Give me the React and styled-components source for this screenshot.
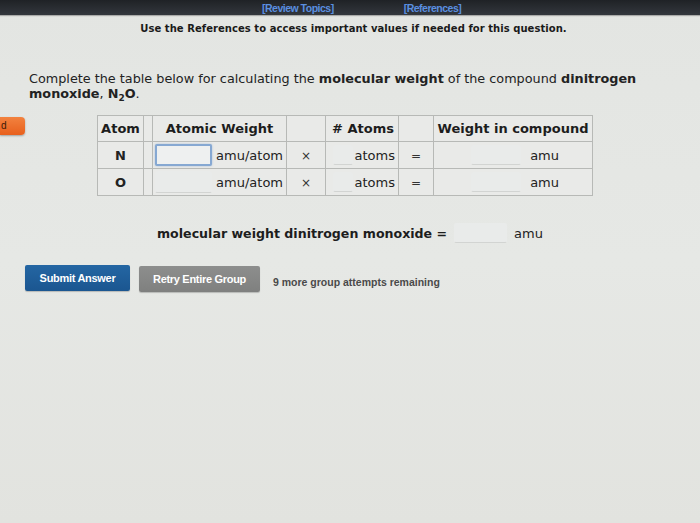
import React from "react";
import styled, { createGlobalStyle } from "styled-components";

const Global = createGlobalStyle`
  html, body { margin: 0; padding: 0; }
  body {
    background: #e4e6e3;
    font-family: "DejaVu Sans", Verdana, sans-serif;
    color: #1c1c1c;
    width: 700px;
    height: 523px;
    overflow: hidden;
  }
`;

const Page = styled.div`
  display: flex;
  flex-direction: column;
  width: 700px;
  height: 523px;
  background: linear-gradient(180deg, #e3e5e2 0%, #e6e8e5 50%, #e2e3df 100%);
`;

const TopBar = styled.div`
  height: 15px;
  background: linear-gradient(180deg, #1f2226 0%, #33373d 100%);
  display: flex;
  align-items: center;
  padding-left: 262px;
  gap: 70px;
  box-shadow: 0 1px 1px rgba(0,0,0,0.25);
`;

const BarLink = styled.span`
  font-family: "Liberation Sans", Arial, sans-serif;
  font-weight: 700;
  font-size: 10.5px;
  letter-spacing: -0.5px;
  color: #5a8fe0;
`;

const Notice = styled.div`
  text-align: center;
  font-weight: 700;
  font-size: 10px;
  letter-spacing: 0.05px;
  margin-top: 8px;
  padding-left: 7px;
  color: #1a1a1a;
`;

const Intro = styled.p`
  margin: 37px 0 0 29px;
  width: 650px;
  font-size: 12.8px;
  line-height: 15px;
  color: #222;
  b { font-weight: 700; }
`;

const Formula = styled.b`
  display: inline-block;
  line-height: 15px;
`;

const Sub = styled.span`
  font-size: 9px;
  position: relative;
  top: 3px;
`;

const TableRow = styled.div`
  display: flex;
  align-items: flex-start;
  margin-top: 12px;
`;

const SideTab = styled.div`
  width: 25px;
  height: 18px;
  margin-top: 2px;
  border-radius: 0 4px 4px 0;
  background: linear-gradient(180deg, #f2823f 0%, #e8601d 100%);
  box-shadow: 0 1px 2px rgba(0,0,0,0.3);
  font-family: "Liberation Sans", Arial, sans-serif;
  font-size: 10px;
  color: #3a1a08;
  line-height: 18px;
  padding-left: 1px;
  box-sizing: border-box;
  overflow: hidden;
`;

const Table = styled.table`
  margin-left: 72px;
  border-collapse: collapse;
  table-layout: fixed;
  width: 495px;
  border: 1px solid #a9aba8;
  background: #e9eae8;
`;

const Col = styled.col`
  width: ${p => p.$w}px;
`;

const Th = styled.th`
  height: 25px;
  padding: 0 ${p => p.$pad ?? 2}px;
  font-size: 13px;
  font-weight: 700;
  text-align: ${p => p.$align || "center"};
  border: 1px solid #b7b9b6;
  color: #1d1d1d;
  white-space: nowrap;
  overflow: hidden;
`;

const Td = styled.td`
  height: 26px;
  padding: 0 ${p => p.$pr ?? 2}px 0 ${p => p.$pl ?? 2}px;
  font-size: 13px;
  font-weight: ${p => (p.$bold ? 700 : 400)};
  text-align: center;
  border: 1px solid #b7b9b6;
  color: #222;
  white-space: nowrap;
  overflow: hidden;
`;

const Cell = styled.div`
  display: flex;
  align-items: center;
  justify-content: space-between;
`;

const Field = styled.div`
  width: ${p => p.$w}px;
  height: ${p => p.$h || 20}px;
  box-sizing: border-box;
  background: ${p => (p.$focus ? "#eef0f0" : "#e9ebea")};
  border: ${p => (p.$focus ? "2px solid #86a8d2" : "1px solid transparent")};
  border-bottom: ${p => (p.$focus ? "2px solid #86a8d2" : "1px solid #d2d4d2")};
  border-radius: 2px;
  box-shadow: ${p => (p.$focus ? "0 0 2px rgba(90,140,200,0.5)" : "none")};
`;

const Unit = styled.span`
  font-size: 13px;
  color: #222;
`;

const Op = styled.span`
  font-size: 12px;
  color: #333;
`;

const MolRow = styled.div`
  display: flex;
  align-items: center;
  margin: 27px 0 0 157px;
  gap: 7px;
`;

const MolLabel = styled.span`
  font-size: 12.6px;
  font-weight: 700;
  color: #1d1d1d;
`;

const Buttons = styled.div`
  display: flex;
  align-items: center;
  margin: 21px 0 0 25px;
  gap: 9px;
`;

const Btn = styled.div`
  height: 26px;
  width: ${p => p.$w}px;
  margin-top: ${p => p.$mt || 0}px;
  display: flex;
  align-items: center;
  justify-content: center;
  border-radius: 2px;
  background: ${p => p.$bg};
  font-family: "Liberation Sans", Arial, sans-serif;
  font-weight: 700;
  font-size: 11px;
  letter-spacing: -0.3px;
  color: #fff;
  box-shadow: 0 1px 1px rgba(0,0,0,0.2);
`;

const Remaining = styled.span`
  margin-left: 4px;
  margin-top: 8px;
  font-family: "Liberation Sans", Arial, sans-serif;
  font-weight: 700;
  font-size: 10.5px;
  color: #4a4a4a;
`;

const rows = [
  { atom: "N", focus: true },
  { atom: "O", focus: false },
];

export default function App() {
  return (
    <>
      <Global />
      <Page>
        <TopBar>
          <BarLink>[Review Topics]</BarLink>
          <BarLink>[References]</BarLink>
        </TopBar>
        <Notice>Use the References to access important values if needed for this question.</Notice>
        <Intro>
          Complete the table below for calculating the <b>molecular weight</b> of the compound <b>dinitrogen monoxide</b>, <Formula>N<Sub>2</Sub>O</Formula>.
        </Intro>
        <TableRow>
          <SideTab>d</SideTab>
          <Table>
            <colgroup>
              <Col $w={46} />
              <Col $w={9} />
              <Col $w={134} />
              <Col $w={39} />
              <Col $w={73} />
              <Col $w={35} />
              <Col $w={159} />
            </colgroup>
            <thead>
              <tr>
                <Th>Atom</Th>
                <Th $pad={0}></Th>
                <Th>Atomic Weight</Th>
                <Th></Th>
                <Th $align="right" $pad={4}>&#35; Atoms</Th>
                <Th></Th>
                <Th>Weight in compound</Th>
              </tr>
            </thead>
            <tbody>
              {rows.map(r => (
                <tr key={r.atom}>
                  <Td $bold>{r.atom}</Td>
                  <Td $pl={0} $pr={0}></Td>
                  <Td $pl={2} $pr={3}>
                    <Cell>
                      <Field $w={57} $h={22} $focus={r.focus} />
                      <Unit>amu/atom</Unit>
                    </Cell>
                  </Td>
                  <Td><Op>×</Op></Td>
                  <Td $pl={7} $pr={3}>
                    <Cell>
                      <Field $w={20} />
                      <Unit>atoms</Unit>
                    </Cell>
                  </Td>
                  <Td><Op>=</Op></Td>
                  <Td $pl={37} $pr={33}>
                    <Cell>
                      <Field $w={50} />
                      <Unit>amu</Unit>
                    </Cell>
                  </Td>
                </tr>
              ))}
            </tbody>
          </Table>
        </TableRow>
        <MolRow>
          <MolLabel>molecular weight dinitrogen monoxide =</MolLabel>
          <Field $w={53} />
          <Unit>amu</Unit>
        </MolRow>
        <Buttons>
          <Btn $bg="linear-gradient(180deg,#2466a3,#1b5690)" $w={105}>Submit Answer</Btn>
          <Btn $bg="linear-gradient(180deg,#8d8e8d,#7f807f)" $w={121} $mt={2}>Retry Entire Group</Btn>
          <Remaining>9 more group attempts remaining</Remaining>
        </Buttons>
      </Page>
    </>
  );
}
